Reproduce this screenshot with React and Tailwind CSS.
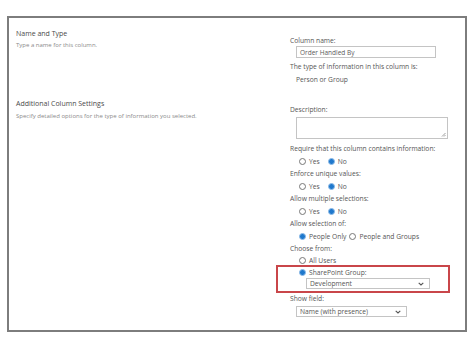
import React from "react";

function Radio({ checked }) {
  return checked ? (
    <span className="inline-flex w-[7px] h-[7px] rounded-full border border-[#8dbbe8] bg-[#1f78cc] shrink-0" />
  ) : (
    <span className="inline-flex w-[7px] h-[7px] rounded-full border border-[#777] bg-white shrink-0" />
  );
}

function Chevron() {
  return (
    <svg width="6" height="4" viewBox="0 0 6 4" className="shrink-0">
      <path d="M0.7 0.8 L3 3 L5.3 0.8" fill="none" stroke="#555" strokeWidth="1.1" />
    </svg>
  );
}

function YesNo({ mt }) {
  return (
    <div className={`flex items-center h-[11px] pl-[9px] gap-[3px] ${mt}`}>
      <Radio />
      <span>Yes</span>
      <span className="w-[2px]" />
      <Radio checked />
      <span>No</span>
    </div>
  );
}

export default function App() {
  return (
    <div className="w-[474px] h-[339px] bg-white pt-[16px] pl-[7px] font-['Open_Sans',sans-serif] text-[#555]">
      <div className="w-[460px] h-[316px] border-2 border-[#7d7d7d] flex">
        <div className="w-[281px] pl-[7px] pt-[10px]">
          <div className="text-[7px] leading-[11px] text-[#4a4a4a]">Name and Type</div>
          <div className="text-[6px] leading-[8px] mt-[2px] text-[#8a8a8a]">Type a name for this column.</div>
          <div className="text-[7px] leading-[11px] text-[#4a4a4a] mt-[49px]">Additional Column Settings</div>
          <div className="text-[6px] leading-[8px] mt-[3px] text-[#8a8a8a]">
            Specify detailed options for the type of information you selected.
          </div>
        </div>
        <div className="flex flex-col pt-[17px] text-[6.7px] leading-[11px]">
          <div className="h-[11px]">Column name:</div>
          <div className="ml-[6px] w-[140px] h-[12px] border border-[#c4c4c4] flex items-center pl-[3px] text-[6.5px] text-[#5a5a5a]">
            Order Handled By
          </div>
          <div className="h-[11px] mt-[3px]">The type of information in this column is:</div>
          <div className="h-[11px] mt-[2px] pl-[6px]">Person or Group</div>
          <div className="h-[11px] mt-[19px]">Description:</div>
          <div className="ml-[6px] mt-[2px] w-[152px] h-[22px] border border-[#c4c4c4] relative">
            <svg width="5" height="5" viewBox="0 0 5 5" className="absolute right-[1px] bottom-[1px]">
              <path d="M4.5 1 L1 4.5 M4.5 3 L3 4.5" stroke="#777" strokeWidth="0.7" />
            </svg>
          </div>
          <div className="h-[11px] mt-[4px]">Require that this column contains information:</div>
          <YesNo mt="mt-[2px]" />
          <div className="h-[11px] mt-[1px]">Enforce unique values:</div>
          <YesNo mt="mt-[2px]" />
          <div className="h-[11px] mt-[1px]">Allow multiple selections:</div>
          <YesNo mt="mt-[2px]" />
          <div className="h-[11px] mt-[1px]">Allow selection of:</div>
          <div className="flex items-center h-[11px] pl-[9px] gap-[3px] mt-[2px]">
            <Radio checked />
            <span>People Only</span>
            <Radio />
            <span>People and Groups</span>
          </div>
          <div className="h-[11px] mt-[1px]">Choose from:</div>
          <div className="flex items-center h-[11px] pl-[9px] gap-[3px] mt-[1px]">
            <Radio />
            <span>All Users</span>
          </div>
          <div className="-ml-[14px] w-[174px] border-2 border-[#c9464a] pl-[21px] pb-[2px] -mt-[1px]">
            <div className="flex items-center h-[10px] gap-[3px]">
              <Radio checked />
              <span>SharePoint Group:</span>
            </div>
            <div className="ml-[7px] mt-[1px] w-[124px] h-[11px] border border-[#c4c4c4] flex items-center justify-between pl-[3px] pr-[5px]">
              <span>Development</span>
              <Chevron />
            </div>
          </div>
          <div className="h-[11px] mt-[0px]">Show field:</div>
          <div className="ml-[6px] mt-[2px] w-[111px] h-[11px] border border-[#c4c4c4] flex items-center justify-between pl-[3px] pr-[5px]">
            <span>Name (with presence)</span>
            <Chevron />
          </div>
        </div>
      </div>
    </div>
  );
}
